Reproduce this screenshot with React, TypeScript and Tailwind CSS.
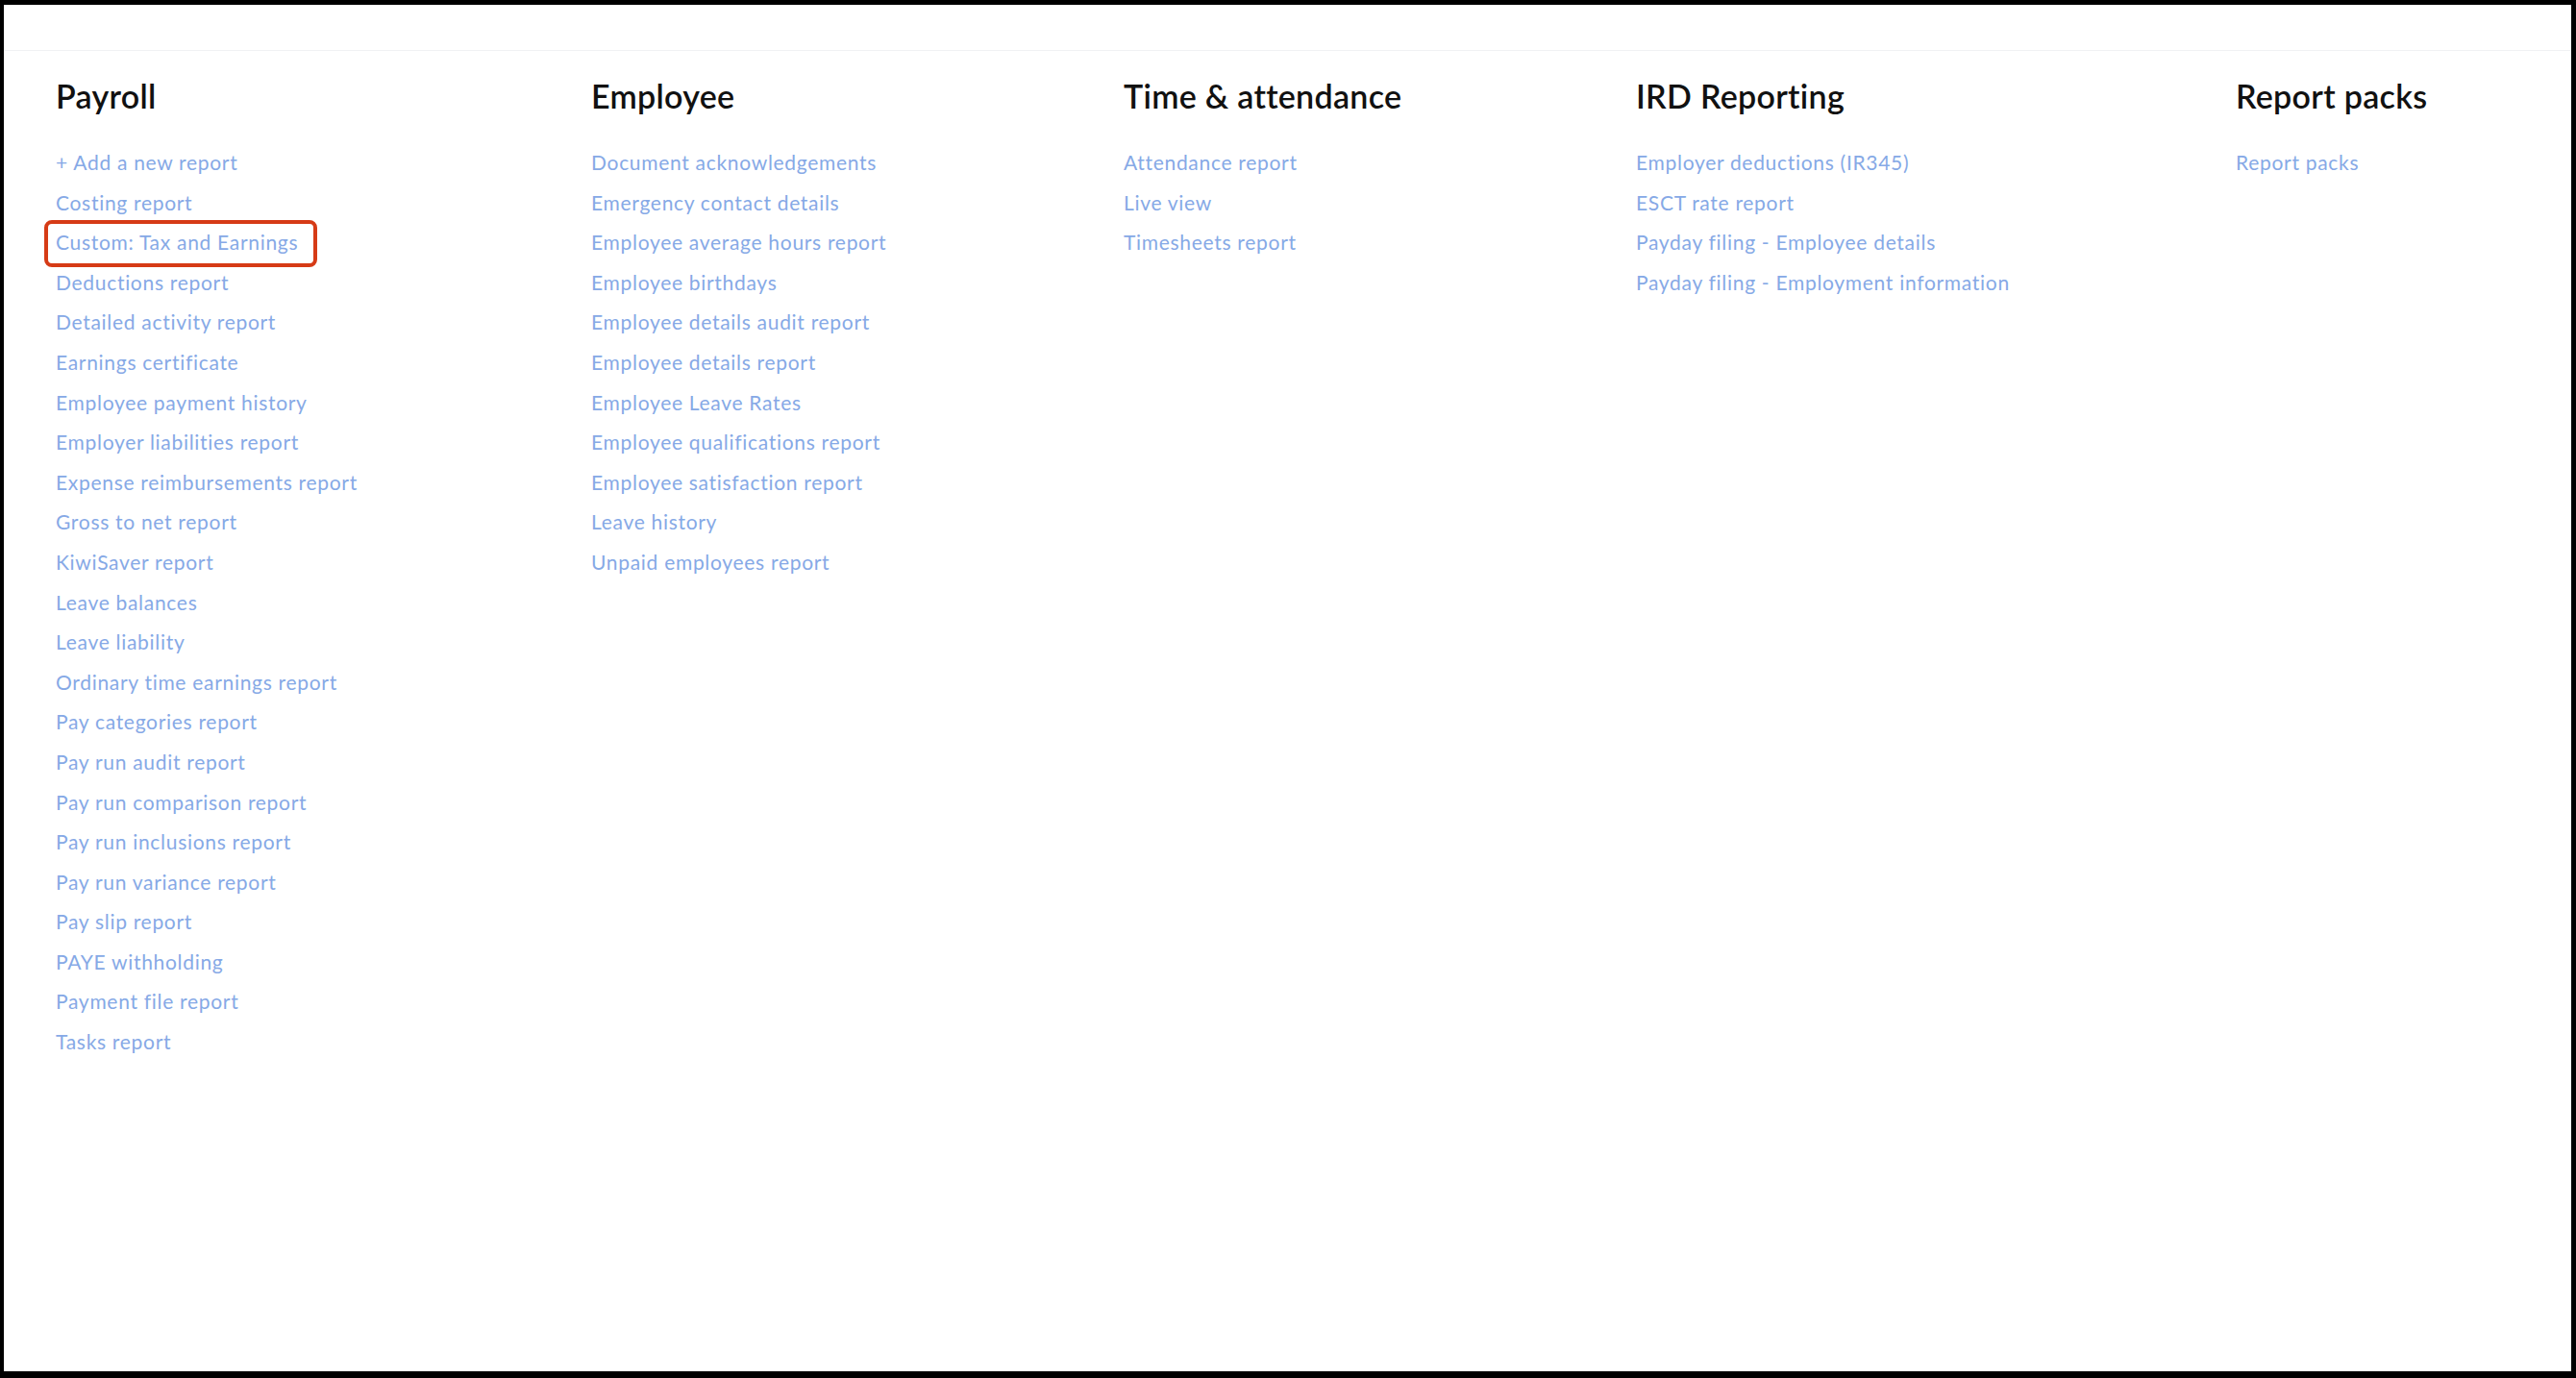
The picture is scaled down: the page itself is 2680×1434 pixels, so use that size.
import React from "react";

const columns: { title: string; width: string; items: string[] }[] = [
  {
    title: "Payroll",
    width: "w-[557px]",
    items: [
      "+ Add a new report",
      "Costing report",
      "Custom: Tax and Earnings",
      "Deductions report",
      "Detailed activity report",
      "Earnings certificate",
      "Employee payment history",
      "Employer liabilities report",
      "Expense reimbursements report",
      "Gross to net report",
      "KiwiSaver report",
      "Leave balances",
      "Leave liability",
      "Ordinary time earnings report",
      "Pay categories report",
      "Pay run audit report",
      "Pay run comparison report",
      "Pay run inclusions report",
      "Pay run variance report",
      "Pay slip report",
      "PAYE withholding",
      "Payment file report",
      "Tasks report",
    ],
  },
  {
    title: "Employee",
    width: "w-[554px]",
    items: [
      "Document acknowledgements",
      "Emergency contact details",
      "Employee average hours report",
      "Employee birthdays",
      "Employee details audit report",
      "Employee details report",
      "Employee Leave Rates",
      "Employee qualifications report",
      "Employee satisfaction report",
      "Leave history",
      "Unpaid employees report",
    ],
  },
  {
    title: "Time & attendance",
    width: "w-[533px]",
    items: ["Attendance report", "Live view", "Timesheets report"],
  },
  {
    title: "IRD Reporting",
    width: "w-[624px]",
    items: [
      "Employer deductions (IR345)",
      "ESCT rate report",
      "Payday filing - Employee details",
      "Payday filing - Employment information",
    ],
  },
  {
    title: "Report packs",
    width: "flex-1",
    items: ["Report packs"],
  },
];

export default function App() {
  return (
    <div
      className="h-[1434px] w-[2680px] box-border border-black border-t-[5px] border-l-4 border-r-[5px] border-b-[7px] bg-white flex flex-col"
      style={{ fontFamily: "Lato, 'Liberation Sans', sans-serif" }}
    >
      <div className="h-[48px] border-b border-[#f0f1f3]" />
      <div className="flex pl-[54px] pt-[25px]">
        {columns.map((col) => (
          <div key={col.title} className={`${col.width} flex flex-col`}>
            <h2 className="text-[34px] leading-[44px] font-semibold text-[#111111] mb-[26px] tracking-[0.3px]">
              {col.title}
            </h2>
            <ul className="flex flex-col">
              {col.items.map((item) => (
                <li key={item} className="text-[21px] leading-[41.6px] text-[#86a9e6] tracking-[0.7px]">
                  {item === "Custom: Tax and Earnings" ? (
                    <span className="relative inline-block">
                      {item}
                      <span className="absolute -left-[12px] -right-[20px] top-[-2px] bottom-[-5px] border-4 border-[#d63b16] rounded-[8px]" />
                    </span>
                  ) : (
                    item
                  )}
                </li>
              ))}
            </ul>
          </div>
        ))}
      </div>
    </div>
  );
}
